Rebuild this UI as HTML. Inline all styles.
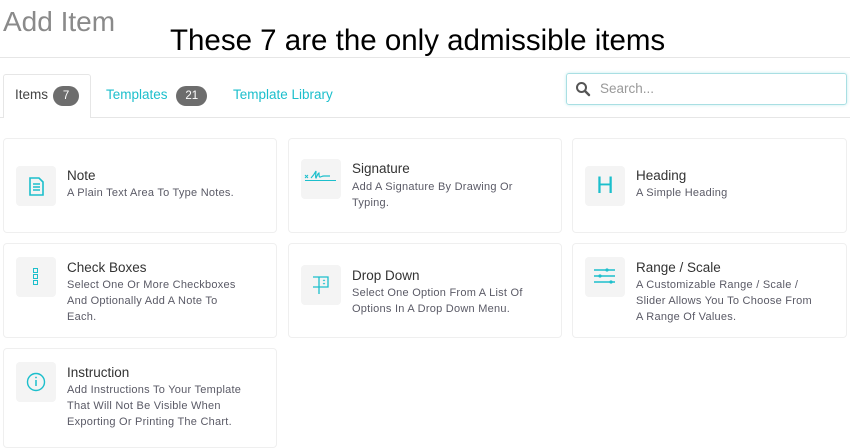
<!DOCTYPE html>
<html><head><style>
*{margin:0;padding:0;box-sizing:border-box}
body{width:850px;height:440px;overflow:hidden;background:#fff;font-family:"Liberation Sans",sans-serif;position:relative}
.abs{position:absolute}
.card{position:absolute;border:1px solid #efefef;border-radius:4px;background:#fff}
.ic{position:absolute;width:40px;height:40px;background:#f4f4f4;border-radius:4px;left:12px}
.t{position:absolute;left:63px;font-size:13.5px;color:#333}
.d{position:absolute;left:63px;font-size:11px;color:#5a5a66;line-height:16px;letter-spacing:.25px}
.tab{color:#1cbfcc;font-size:13.5px}
.badge{display:inline-block;background:#6d6d6d;color:#fff;border-radius:11px;font-size:11.5px;text-align:center;height:20px;line-height:20px}
</style></head><body>
<div class="abs" style="left:3px;top:6px;font-size:28px;color:#8a8a8a">Add Item</div>
<div class="abs" style="left:170px;top:24px;font-size:29.5px;color:#000">These 7 are the only admissible items</div>
<div class="abs" style="left:0;top:57px;width:850px;height:1px;background:#e6e6e6"></div>
<div class="abs" style="left:0;top:117px;width:850px;height:1px;background:#e6e6e6"></div>
<div class="abs" style="left:3px;top:74px;width:88px;height:44px;border:1px solid #e6e6e6;border-bottom:none;border-radius:3px 3px 0 0;background:#fff"></div>
<div class="abs" style="left:15px;top:86px;font-size:13.5px;color:#444">Items<span class="badge" style="width:26px;margin-left:5px">7</span></div>
<div class="abs tab" style="left:106px;top:86px">Templates <span class="badge" style="width:31px;margin-left:5px">21</span></div>
<div class="abs tab" style="left:233px;top:87px">Template Library</div>
<div class="abs" style="left:566px;top:73px;width:281px;height:32px;border:1px solid #a9dfe3;border-radius:3px;box-shadow:0 0 3px #c6ecef"></div>
<svg class="abs" style="left:575px;top:81px" width="16" height="16"><circle cx="6.5" cy="6.5" r="4.5" fill="none" stroke="#555" stroke-width="2"/><line x1="10" y1="10" x2="14" y2="14" stroke="#555" stroke-width="2.4" stroke-linecap="round"/></svg>
<div class="abs" style="left:600px;top:81px;font-size:13.5px;color:#999">Search...</div>

<div class="card" style="left:3px;top:138px;width:274px;height:95px">
<div class="ic" style="top:27px"><svg width="40" height="40"><path d="M14 12h9l4 4v13H14z" fill="none" stroke="#1cbfcc" stroke-width="1.6"/><path d="M17 18h7M17 21h7M17 24h7" stroke="#1cbfcc" stroke-width="1.4"/></svg></div>
<div class="t" style="top:29px">Note</div><div class="d" style="top:46px">A Plain Text Area To Type Notes.</div></div>
<div class="card" style="left:288px;top:138px;width:274px;height:95px">
<div class="ic" style="top:20px"><svg width="40" height="40"><path d="M4 16l3 3M7 16l-3 3" stroke="#1cbfcc" stroke-width="1"/><path d="M10 19c2-2 4-5 5-7 0 3-1 6 0 7 1-2 2-5 3-5 0 2 0 4 1 4 1 0 2-1 4-1 2 0 4 0 6 0" fill="none" stroke="#1cbfcc" stroke-width="1.2"/><path d="M4 21.5h31" stroke="#1cbfcc" stroke-width="1"/></svg></div>
<div class="t" style="top:22px">Signature</div><div class="d" style="top:40px">Add A Signature By Drawing Or<br>Typing.</div></div>
<div class="card" style="left:572px;top:138px;width:275px;height:95px">
<div class="ic" style="top:27px"><div style="color:#1cbfcc;font-size:24px;text-align:center;line-height:40px">H</div></div>
<div class="t" style="top:29px">Heading</div><div class="d" style="top:46px">A Simple Heading</div></div>

<div class="card" style="left:3px;top:243px;width:274px;height:95px">
<div class="ic" style="top:13px"><svg width="40" height="40"><rect x="17.5" y="11.5" width="4" height="4" fill="none" stroke="#1cbfcc"/><rect x="17.5" y="17.5" width="4" height="4" fill="none" stroke="#1cbfcc"/><rect x="17.5" y="23.5" width="4" height="4" fill="none" stroke="#1cbfcc"/></svg></div>
<div class="t" style="top:16px">Check Boxes</div><div class="d" style="top:33px">Select One Or More Checkboxes<br>And Optionally Add A Note To<br>Each.</div></div>
<div class="card" style="left:288px;top:243px;width:274px;height:95px">
<div class="ic" style="top:21px"><svg width="40" height="40"><path d="M12 12h15v10H12M18 12v17" fill="none" stroke="#1cbfcc" stroke-width="1.3"/><path d="M22 16l1-1 1 1M22 18l1 1 1-1" fill="none" stroke="#1cbfcc" stroke-width=".8"/></svg></div>
<div class="t" style="top:24px">Drop Down</div><div class="d" style="top:41px">Select One Option From A List Of<br>Options In A Drop Down Menu.</div></div>
<div class="card" style="left:572px;top:243px;width:275px;height:95px">
<div class="ic" style="top:13px"><svg width="40" height="40"><path d="M9 13h21M9 19h21M9 25h21" stroke="#1cbfcc" stroke-width="1.5"/><circle cx="22" cy="13" r="1.6" fill="#1cbfcc"/><circle cx="15" cy="19" r="1.6" fill="#1cbfcc"/><circle cx="26" cy="25" r="1.6" fill="#1cbfcc"/></svg></div>
<div class="t" style="top:16px">Range / Scale</div><div class="d" style="top:33px">A Customizable Range / Scale /<br>Slider Allows You To Choose From<br>A Range Of Values.</div></div>

<div class="card" style="left:3px;top:348px;width:274px;height:100px">
<div class="ic" style="top:13px"><svg width="40" height="40"><circle cx="20" cy="20" r="8.5" fill="none" stroke="#1cbfcc" stroke-width="1.4"/><path d="M20 18v6" stroke="#1cbfcc" stroke-width="1.5"/><circle cx="20" cy="15.5" r=".9" fill="#1cbfcc"/></svg></div>
<div class="t" style="top:16px">Instruction</div><div class="d" style="top:33px">Add Instructions To Your Template<br>That Will Not Be Visible When<br>Exporting Or Printing The Chart.</div></div>
</body></html>
